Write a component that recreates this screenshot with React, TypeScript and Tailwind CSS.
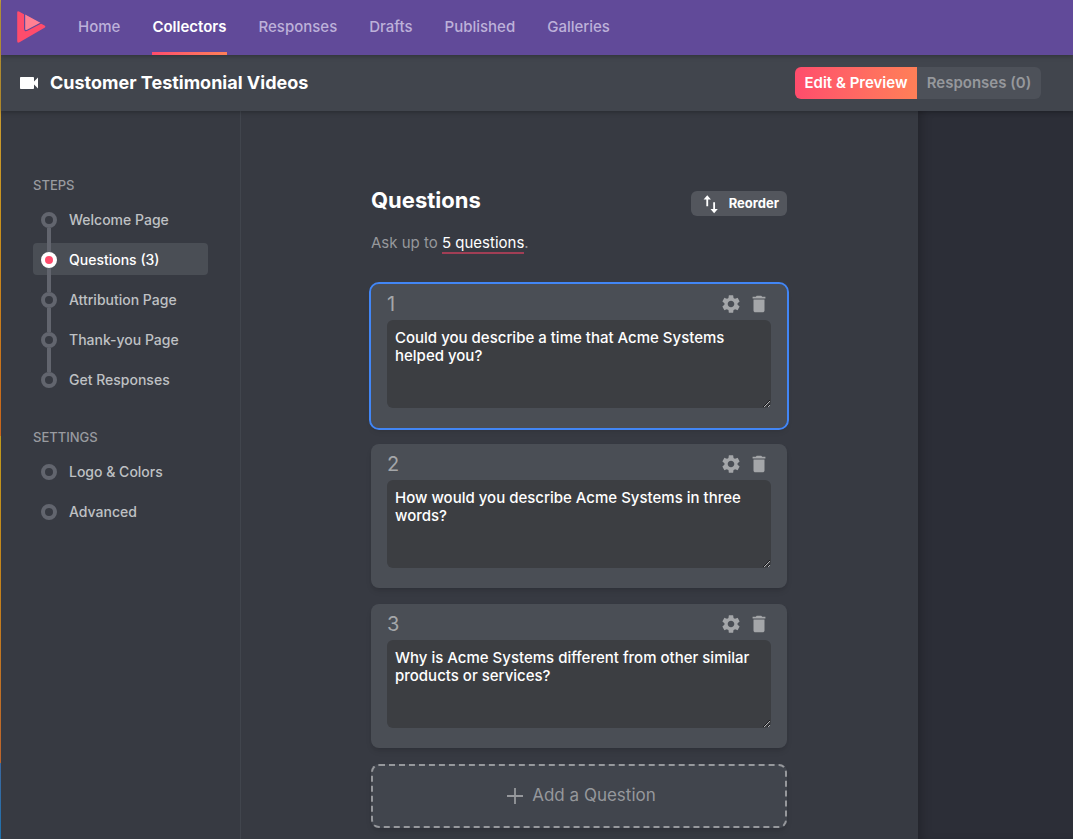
import { useState } from "react";
import { MdDelete, MdSettings, MdVideocam } from "react-icons/md";

const navItems = ["Home", "Collectors", "Responses", "Drafts", "Published", "Galleries"];
const steps = ["Welcome Page", "Questions (3)", "Attribution Page", "Thank-you Page", "Get Responses"];
const settings = ["Logo & Colors", "Advanced"];
const initialQuestions = [
  "Could you describe a time that Acme Systems helped you?",
  "How would you describe Acme Systems in three words?",
  "Why is Acme Systems different from other similar products or services?",
];

function Logo() {
  return (
    <svg viewBox="1 1 31 34" className="h-[34px] w-[31px]" aria-hidden="true">
      <path
        d="M2.200 2.600Q2.200 .5 4 1.500L29.500 15.600Q31.200 16.700 29.500 17.800L4.500 32.200Q2.200 33.500 2.200 31Z"
        fill="#ff4c6c"
      />
      <path d="M9.600 4.300L25.800 12.900L12 20.400Q9.600 21.400 9.600 18.800Z" fill="#ff8093" />
      <path
        d="M9.600 4V18.400Q9.600 21.600 12.300 20.200L26.500 12.700"
        fill="none"
        stroke="#614a99"
        strokeWidth="1.200"
      />
    </svg>
  );
}

function TopNav() {
  return (
    <nav className="relative z-20 flex h-[55px] items-stretch bg-[#614a99] pl-[15px] shadow-[0_1px_5px_rgba(0,0,0,0.3)]">
      <a href="#home" aria-label="Dashboard" className="mr-[31px] flex items-center">
        <Logo />
      </a>
      <ul className="flex gap-8">
        {navItems.map((item) => (
          <li key={item} className="flex">
            <a
              href="#"
              className={
                item === "Collectors"
                  ? "relative flex items-center text-[15px] font-semibold text-white after:absolute after:inset-x-0 after:bottom-0 after:h-[3px] after:bg-linear-to-r after:from-[#ff4c6c] after:to-[#ff7f57]"
                  : "flex items-center text-[15px] font-medium text-[#bdb1d9]"
              }
            >
              {item}
            </a>
          </li>
        ))}
      </ul>
    </nav>
  );
}

function TitleBar() {
  return (
    <header className="relative z-10 flex h-14 items-center bg-[#41454d] pr-8 pl-4 shadow-[0_1px_5px_rgba(0,0,0,0.3)]">
      <MdVideocam className="mr-[9px] size-6 text-white" aria-hidden="true" />
      <h1 className="text-lg font-bold text-white">Customer Testimonial Videos</h1>
      <div className="ml-auto flex h-8 overflow-hidden rounded-md text-[15px] font-semibold">
        <button className="w-[122px] bg-linear-to-r from-[#ff4c6c] to-[#ff7f57] text-white">Edit &amp; Preview</button>
        <button className="w-[124px] bg-[#4d5159] font-semibold text-[#96989c]">Responses (0)</button>
      </div>
    </header>
  );
}

function StepList({ items, connected }: { items: string[]; connected?: boolean }) {
  return (
    <ul className="flex flex-col gap-2">
      {items.map((item, i) => {
        const active = item === "Questions (3)";
        return (
          <li key={item}>
            <a
              href="#"
              aria-current={active ? "step" : undefined}
              className={
                active
                  ? "relative flex h-8 items-center gap-3 rounded bg-[#4a4e55] px-2 pt-0.5 text-sm font-medium text-white"
                  : "relative flex h-8 items-center gap-3 rounded px-2 pt-0.5 text-sm font-medium text-[#bfc1c4]"
              }
            >
              {connected && i < items.length - 1 && (
                <span className="absolute top-[25px] left-3.5 z-10 h-6 w-1 bg-[#62656e]" />
              )}
              <span
                className={
                  active
                    ? "size-4 rounded-full border-4 border-white bg-[#ff4c6c]"
                    : "size-4 rounded-full border-4 border-[#62656e]"
                }
              />
              {item}
            </a>
          </li>
        );
      })}
    </ul>
  );
}

function Sidebar() {
  return (
    <aside className="w-60 shrink-0 border-r border-[#41454d] px-8 pt-16">
      <h2 className="mb-2 text-[13px] leading-5 font-medium text-[#999ba0]">STEPS</h2>
      <StepList items={steps} connected />
      <h2 className="mt-8 mb-2 text-[13px] leading-5 font-medium text-[#999ba0]">SETTINGS</h2>
      <StepList items={settings} />
    </aside>
  );
}

function QuestionCard({ index, initial }: { index: number; initial: string }) {
  const [text, setText] = useState(initial);
  const id = `question-${index}`;
  return (
    <li
      className={
        index === 1
          ? "rounded-lg bg-[#4a4e55] px-4 pb-5 shadow-md outline-2 outline-[#4286f5]"
          : "rounded-lg bg-[#4a4e55] px-4 pb-5 shadow-md"
      }
    >
      <div className="flex h-9 items-center pt-1 pr-px">
        <label htmlFor={id} className="text-xl leading-8 text-[#a4a6a9]">
          {index}
        </label>
        <button aria-label="Question settings" className="ml-auto text-[#a4a6a9]">
          <MdSettings className="size-[22px]" />
        </button>
        <button aria-label="Delete question" className="ml-1.5 text-[#a4a6a9]">
          <MdDelete className="size-[22px]" />
        </button>
      </div>
      <textarea
        id={id}
        value={text}
        onChange={(e) => setText(e.target.value)}
        className="block h-[88px] w-full resize rounded-md bg-[#3c3e42] px-2 pt-[9px] pb-2 text-[15px] leading-[18px] font-medium text-white"
      />
    </li>
  );
}

function Questions() {
  return (
    <main className="flex min-w-0 flex-1 justify-center bg-[#373a42] pt-[72px] pr-px pb-[11px]">
      <section className="w-[416px]">
        <div className="flex items-center justify-between">
          <h2 className="text-[22px] leading-8 font-bold text-white">Questions</h2>
          <button className="mt-2 flex h-[25px] items-center gap-2 rounded-md bg-[#53565d] px-2 text-[13px] font-bold text-white">
            <svg viewBox="0 0 24 24" className="size-[22px]" fill="none" stroke="currentColor" strokeWidth="2" aria-hidden="true">
              <path d="M9 14.500V5M16.500 10v9" />
              <path d="M5 7L9 2.500l4 4.500zM12.500 17.500l4 4.500L20.500 17.500z" fill="currentColor" stroke="none" />
            </svg>
            Reorder
          </button>
        </div>
        <p className="mt-[17px] text-[15px] leading-5 text-[#96989c]">
          Ask up to{" "}
          <a href="#" className="border-b-2 border-[#a13e55] text-white">
            5 questions
          </a>
          .
        </p>
        <ol className="mt-[31px] flex flex-col gap-4">
          {initialQuestions.map((q, i) => (
            <QuestionCard key={q} index={i + 1} initial={q} />
          ))}
        </ol>
        <button className="mt-4 flex h-16 w-full items-center justify-center gap-2 rounded-lg border-2 border-dashed border-[#96989c] bg-[#41454d] pb-px pl-1 text-[17px] text-[#96989c] shadow-md">
          <svg viewBox="0 0 18 18" className="size-[18px]" stroke="currentColor" strokeWidth="1.800" aria-hidden="true">
            <path d="M9 1v16M1 9h16" />
          </svg>
          Add a Question
        </button>
      </section>
    </main>
  );
}

export default function App() {
  return (
    <div className="flex min-h-screen bg-[#373a42] font-['Inter','Liberation_Sans',sans-serif]">
      <div className="flex w-px shrink-0 flex-col">
        <div className="flex-[52] bg-linear-to-b from-[#c8a540] via-[#c8921c] to-[#c8641c]" />
        <div className="flex-[39] bg-linear-to-b from-[#c09a1c] via-[#c4801c] to-[#bc642c]" />
        <div className="flex-[9] bg-linear-to-b from-[#3a68a0] to-[#1c72ae]" />
      </div>
      <div className="flex min-w-0 flex-1 flex-col">
        <TopNav />
        <TitleBar />
        <div className="flex flex-1">
          <Sidebar />
          <Questions />
          <aside className="w-[155px] shrink-0 bg-[#2c2e37] shadow-[inset_8px_0_12px_-6px_rgba(0,0,0,0.25)]" />
        </div>
      </div>
    </div>
  );
}
